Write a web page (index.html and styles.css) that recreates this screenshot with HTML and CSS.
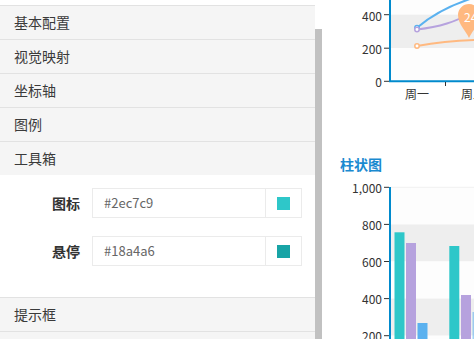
FILE: index.html
```html
<!DOCTYPE html>
<html lang="zh">
<head>
<meta charset="utf-8">
<link rel="stylesheet" href="styles.css">
</head>
<body>
<div class="panel">
  <div class="item"><div class="head">基本配置</div></div>
  <div class="item"><div class="head">视觉映射</div></div>
  <div class="item"><div class="head">坐标轴</div></div>
  <div class="item"><div class="head">图例</div></div>
  <div class="item open">
    <div class="head">工具箱</div>
    <div class="body">
      <div class="field">
        <span class="label">图标</span>
        <div class="input"><span class="value">#2ec7c9</span><span class="swatch-cell"><span class="swatch sw1"></span></span></div>
      </div>
      <div class="field">
        <span class="label">悬停</span>
        <div class="input"><span class="value">#18a4a6</span><span class="swatch-cell"><span class="swatch sw2"></span></span></div>
      </div>
    </div>
  </div>
  <div class="item"><div class="head">提示框</div></div>
  <div class="item"><div class="head"></div></div>
</div>
<div class="scrollbar"><div class="thumb"></div></div>
<div class="charts">
  <svg class="line-chart" width="152" height="100" viewBox="322 0 152 100">
    <rect x="391" y="-20" width="83" height="34.7" fill="#fdfdfd"/>
    <rect x="391" y="14.7" width="83" height="33.5" fill="#eeeeee"/>
    <rect x="391" y="48.2" width="83" height="33.1" fill="#fdfdfd"/>
    <path d="M417,27.7 Q440,8 476,-3" fill="none" stroke="#5ab1ef" stroke-width="2"/>
    <path d="M417,29.5 C440,27 455,22 473,12" fill="none" stroke="#b6a2de" stroke-width="2"/>
    <path d="M417,46 Q445,41 476,40" fill="none" stroke="#ffb980" stroke-width="2"/>
    <circle cx="417" cy="27.7" r="2.2" fill="#fff" stroke="#5ab1ef" stroke-width="1.5"/>
    <circle cx="417" cy="29.5" r="2.2" fill="#fff" stroke="#b6a2de" stroke-width="1.5"/>
    <circle cx="417" cy="46" r="2.2" fill="#fff" stroke="#ffb980" stroke-width="1.5"/>
    <path d="M469,38 C466,31 458,24 458,15 A11,11 0 1,1 480,15 C480,24 472,31 469,38 Z" fill="#ffb980"/>
    <text x="464" y="16" class="pin-text">24</text>
    <line x1="390" y1="0" x2="390" y2="82" stroke="#008acd" stroke-width="2"/>
    <line x1="389" y1="81.3" x2="476" y2="81.3" stroke="#008acd" stroke-width="2"/>
    <g stroke="#333" stroke-width="1">
      <line x1="384" y1="14.7" x2="389" y2="14.7"/>
      <line x1="384" y1="48.2" x2="389" y2="48.2"/>
      <line x1="384" y1="81.3" x2="389" y2="81.3"/>
      <line x1="445.5" y1="82" x2="445.5" y2="86"/>
    </g>
    <g class="ylab">
      <text x="382" y="15">400</text>
      <text x="382" y="48.5">200</text>
      <text x="382" y="81.5">0</text>
    </g>
    <g class="xlab">
      <text x="417" y="93">周一</text>
      <text x="473" y="93">周二</text>
    </g>
  </svg>
  <h3 class="title">柱状图</h3>
  <svg class="bar-chart" width="152" height="165" viewBox="322 174 152 165">
    <rect x="391" y="187.3" width="83" height="37.1" fill="#fdfdfd"/>
    <rect x="391" y="224.4" width="83" height="37.1" fill="#eeeeee"/>
    <rect x="391" y="261.5" width="83" height="37.1" fill="#fdfdfd"/>
    <rect x="391" y="298.6" width="83" height="37.1" fill="#eeeeee"/>
    <rect x="391" y="335.7" width="83" height="10" fill="#fdfdfd"/>
    <line x1="391" y1="187.3" x2="474" y2="187.3" stroke="#f0f0f0" stroke-width="1"/>
    <rect x="394.5" y="232.3" width="10" height="120" fill="#2ec7c9"/>
    <rect x="406" y="243" width="10" height="120" fill="#b6a2de"/>
    <rect x="417.5" y="323" width="10" height="40" fill="#5ab1ef"/>
    <rect x="449.3" y="246" width="10" height="120" fill="#2ec7c9"/>
    <rect x="461" y="295" width="10" height="60" fill="#b6a2de"/>
    <rect x="472.5" y="312" width="10" height="60" fill="#5ab1ef" opacity="0.55"/>
    <line x1="390" y1="187" x2="390" y2="345" stroke="#008acd" stroke-width="2"/>
    <g stroke="#333" stroke-width="1">
      <line x1="384" y1="187.3" x2="389" y2="187.3"/>
      <line x1="384" y1="224.4" x2="389" y2="224.4"/>
      <line x1="384" y1="261.5" x2="389" y2="261.5"/>
      <line x1="384" y1="298.6" x2="389" y2="298.6"/>
      <line x1="384" y1="335.7" x2="389" y2="335.7"/>
    </g>
    <g class="ylab">
      <text x="382" y="187.5">1,000</text>
      <text x="382" y="224.6">800</text>
      <text x="382" y="261.7">600</text>
      <text x="382" y="298.8">400</text>
      <text x="382" y="335.9">200</text>
    </g>
  </svg>
</div>
</body>
</html>
```
FILE: styles.css
```css
html, body {
  margin: 0;
  padding: 0;
}
body {
  display: flex;
  width: 474px;
  height: 339px;
  overflow: hidden;
  background: #fff;
  font-family: "Noto Sans CJK SC", "Noto Sans", sans-serif;
  color: #333;
}
.panel {
  width: 315px;
  flex: none;
  padding-top: 5px;
  background: #fff;
}
.item {
  border-top: 1px solid #e2e2e2;
}
.head {
  height: 33px;
  line-height: 33px;
  padding-left: 14px;
  font-size: 14px;
  color: #3a3a3a;
  background: #f5f5f5;
}
.body {
  background: #fff;
  padding: 13px 0 31px;
  display: flex;
  flex-direction: column;
  gap: 18px;
}
.field {
  display: flex;
  align-items: center;
  height: 30px;
}
.label {
  width: 80px;
  text-align: right;
  font-size: 14px;
  font-weight: bold;
  color: #333;
  padding-right: 12px;
}
.input {
  display: flex;
  width: 210px;
  height: 30px;
  box-sizing: border-box;
  border: 1px solid #ebebeb;
  background: #fff;
}
.value {
  flex: 1;
  padding-left: 11px;
  font-size: 13px;
  line-height: 28px;
  color: #666;
}
.swatch-cell {
  width: 35px;
  border-left: 1px solid #ebebeb;
  display: flex;
  align-items: center;
  justify-content: center;
}
.swatch {
  width: 13px;
  height: 13px;
}
.sw1 { background: #2ec7c9; }
.sw2 { background: #18a4a6; }
.scrollbar {
  width: 7px;
  flex: none;
  background: #fff;
}
.thumb {
  margin-top: 29px;
  height: 320px;
  background: #c1c1c1;
}
.charts {
  width: 152px;
  flex: none;
  display: flex;
  flex-direction: column;
}
.line-chart, .bar-chart {
  display: block;
  flex: none;
}
.title {
  margin: 54px 0 0 18px;
  height: 20px;
  line-height: 20px;
  font-size: 14px;
  font-weight: bold;
  color: #1a8ad0;
}
.ylab text {
  font-family: "Noto Sans CJK SC", "Noto Sans", sans-serif;
  font-size: 12px;
  fill: #333;
  text-anchor: end;
  dominant-baseline: central;
}
.xlab text {
  font-family: "Noto Sans CJK SC", sans-serif;
  font-size: 12px;
  fill: #333;
  text-anchor: middle;
  dominant-baseline: central;
}
.pin-text {
  font-family: "Noto Sans CJK SC", sans-serif;
  font-size: 12px;
  fill: #fff;
  dominant-baseline: central;
}
```
